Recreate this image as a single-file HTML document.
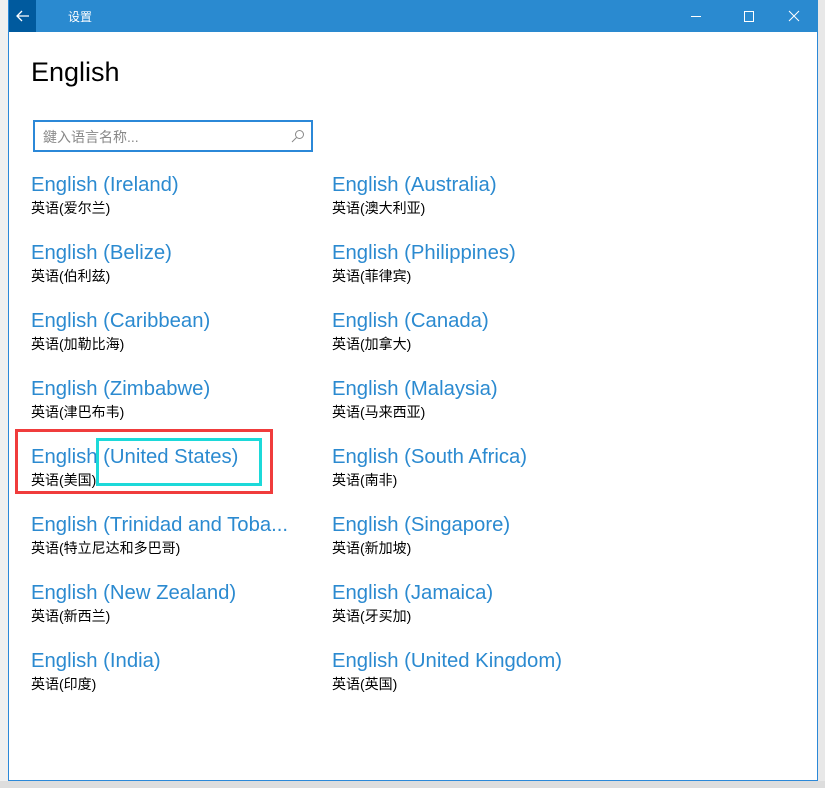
<!DOCTYPE html>
<html><head><meta charset="utf-8"><style>
*{margin:0;padding:0;box-sizing:border-box}
body{width:825px;height:788px;background:#f0f0f0;position:relative;overflow:hidden;font-family:"Liberation Sans","Noto Sans CJK SC",sans-serif}
.win{position:absolute;left:8px;top:0;width:810px;height:781px;background:#fff;border:1px solid #2b88d8;border-top:none}
.tb{position:absolute;left:0;top:0;width:809px;height:32px;background:#2a8ad0;color:#fff}
.back{position:absolute;left:0;top:0;width:27px;height:32px;background:#005a9e}
.t{position:absolute;left:59px;top:8px;font-size:12px}
h1{position:absolute;left:22px;top:57px;font-size:27px;font-weight:normal;color:#000}
.search{position:absolute;left:24px;top:120px;width:280px;height:32px;border:2px solid #2b88d8;font-size:14px;color:#888;padding:5px 8px}
.it{position:absolute}
.it .a{font-size:20.3px;color:#2b8ad0;line-height:24px;white-space:nowrap}
.it .b{font-size:14px;color:#000;line-height:18px;margin-top:2px}
.red{position:absolute;left:15px;top:429px;width:258px;height:65px;border:3px solid #f03c3c}
.cy{position:absolute;left:96px;top:438px;width:166px;height:48px;border:3px solid #1cd9d9}
.side{position:absolute;left:818px;top:0;width:7px;height:788px;background:#e8e8e8}
.bot{position:absolute;left:0;top:781px;width:825px;height:7px;background:#ddd}
</style></head><body>
<div class="side"></div><div class="bot"></div>
<div class="win">
<div class="tb">
<div class="back"><svg width="27" height="32"><path d="M8 16h12M13 11l-5 5 5 5" stroke="#fff" stroke-width="1.3" fill="none"/></svg></div>
<div class="t">设置</div>
<svg style="position:absolute;left:0;top:0" width="809" height="32"><path d="M682 16.5h10" stroke="#fff"/><rect x="735.5" y="11.5" width="9" height="10" stroke="#fff" fill="none"/><path d="M780 11l10 10M790 11l-10 10" stroke="#fff"/></svg>
</div>
<h1>English</h1>
<div class="search">鍵入语言名称...<svg style="position:absolute;right:6px;top:7px" width="14" height="14"><circle cx="8.5" cy="5.5" r="4" stroke="#888" fill="none"/><path d="M5.5 8.5L1 13" stroke="#888"/></svg></div>
<div class="it" style="left:22px;top:173px"><div class="a">English (Ireland)</div><div class="b">英语(爱尔兰)</div></div>
<div class="it" style="left:323px;top:173px"><div class="a">English (Australia)</div><div class="b">英语(澳大利亚)</div></div>
<div class="it" style="left:22px;top:241px"><div class="a">English (Belize)</div><div class="b">英语(伯利兹)</div></div>
<div class="it" style="left:323px;top:241px"><div class="a">English (Philippines)</div><div class="b">英语(菲律宾)</div></div>
<div class="it" style="left:22px;top:309px"><div class="a">English (Caribbean)</div><div class="b">英语(加勒比海)</div></div>
<div class="it" style="left:323px;top:309px"><div class="a">English (Canada)</div><div class="b">英语(加拿大)</div></div>
<div class="it" style="left:22px;top:377px"><div class="a">English (Zimbabwe)</div><div class="b">英语(津巴布韦)</div></div>
<div class="it" style="left:323px;top:377px"><div class="a">English (Malaysia)</div><div class="b">英语(马来西亚)</div></div>
<div class="it" style="left:22px;top:445px"><div class="a">English (United States)</div><div class="b">英语(美国)</div></div>
<div class="it" style="left:323px;top:445px"><div class="a">English (South Africa)</div><div class="b">英语(南非)</div></div>
<div class="it" style="left:22px;top:513px"><div class="a">English (Trinidad and Toba...</div><div class="b">英语(特立尼达和多巴哥)</div></div>
<div class="it" style="left:323px;top:513px"><div class="a">English (Singapore)</div><div class="b">英语(新加坡)</div></div>
<div class="it" style="left:22px;top:581px"><div class="a">English (New Zealand)</div><div class="b">英语(新西兰)</div></div>
<div class="it" style="left:323px;top:581px"><div class="a">English (Jamaica)</div><div class="b">英语(牙买加)</div></div>
<div class="it" style="left:22px;top:649px"><div class="a">English (India)</div><div class="b">英语(印度)</div></div>
<div class="it" style="left:323px;top:649px"><div class="a">English (United Kingdom)</div><div class="b">英语(英国)</div></div>
</div>
<div class="red"></div><div class="cy"></div>
</body></html>
